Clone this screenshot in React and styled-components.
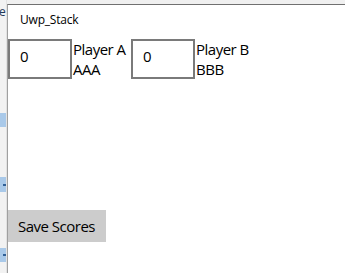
import React from "react";
import styled, { createGlobalStyle } from "styled-components";

const Global = createGlobalStyle`
  html, body { margin: 0; padding: 0; }
  body {
    width: 345px;
    height: 273px;
    overflow: hidden;
    background: #f0f0f0;
    font-family: "Open Sans", "Noto Sans", sans-serif;
  }
`;

const Page = styled.div`
  display: flex;
  flex-direction: row;
  width: 345px;
  height: 273px;
  background: #f0f0f0;
`;

const Sidebar = styled.div`
  width: 7px;
  flex: none;
  display: flex;
  flex-direction: column;
  overflow: hidden;
  background: #f2f2f2;
  border-right: 1px solid #e2e2e2;
  box-sizing: border-box;
`;

const SideGlyph = styled.div`
  margin-top: 6px;
  margin-left: -1px;
  font-size: 12px;
  line-height: 12px;
  color: #1f3a5a;
`;

const SideChip = styled.div`
  margin-top: ${(p) => p.$top}px;
  height: ${(p) => p.$h}px;
  background: #a9c9e9;
  display: flex;
  align-items: center;
  justify-content: flex-end;
`;

const ChipDot = styled.span`
  width: 3px;
  height: 2px;
  background: #2f5f95;
`;

const Window = styled.div`
  flex: 1;
  display: flex;
  flex-direction: column;
  margin-top: 4px;
  background: #ffffff;
  border-top: 1px solid #707070;
  border-left: 1px solid #a0a0a0;
`;

const Title = styled.div`
  height: 34px;
  padding-left: 12px;
  padding-top: 7px;
  box-sizing: border-box;
  font-size: 12px;
  line-height: 16px;
  letter-spacing: -0.2px;
  color: #000;
`;

const Row = styled.div`
  display: flex;
  flex-direction: row;
  align-items: flex-start;
`;

const ScoreBox = styled.div`
  width: 64px;
  height: 40px;
  box-sizing: border-box;
  border: 2px solid #7a7a7a;
  padding: 5px 0 0 10px;
  font-size: 15px;
  line-height: 20px;
  color: #000;
  flex: none;
`;

const PlayerLabel = styled.div`
  width: ${(p) => p.$w}px;
  padding-left: 1px;
  box-sizing: border-box;
  font-size: 15px;
  line-height: 20px;
  letter-spacing: -0.5px;
  color: #000;
  white-space: nowrap;
  flex: none;
`;

const SaveButton = styled.button`
  margin-top: 131px;
  width: 98px;
  height: 32px;
  border: none;
  padding: 0 0 1px 10px;
  text-align: left;
  background: #cccccc;
  font-family: inherit;
  font-size: 15px;
  line-height: 20px;
  letter-spacing: -0.5px;
  color: #000;
  align-self: flex-start;
`;

export default function App() {
  const players = [
    { name: "Player A", code: "AAA", score: 0, w: 59 },
    { name: "Player B", code: "BBB", score: 0, w: 80 },
  ];
  return (
    <>
      <Global />
      <Page>
        <Sidebar>
          <SideGlyph>e</SideGlyph>
          <SideChip $top={95} $h={14} />
          <SideChip $top={50} $h={15}>
            <ChipDot />
          </SideChip>
          <SideChip $top={56} $h={14}>
            <ChipDot />
          </SideChip>
        </Sidebar>
        <Window>
          <Title>Uwp_Stack</Title>
          <Row>
            {players.map((p) => (
              <React.Fragment key={p.name}>
                <ScoreBox>{p.score}</ScoreBox>
                <PlayerLabel $w={p.w}>
                  {p.name}
                  <br />
                  {p.code}
                </PlayerLabel>
              </React.Fragment>
            ))}
          </Row>
          <SaveButton>Save Scores</SaveButton>
        </Window>
      </Page>
    </>
  );
}
